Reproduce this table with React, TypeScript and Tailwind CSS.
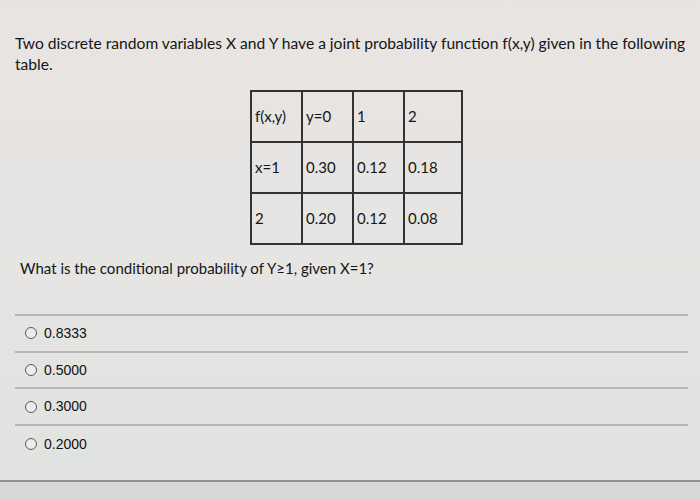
import React from 'react';

const rows = [
  ['f(x,y)', 'y=0', '1', '2'],
  ['x=1', '0.30', '0.12', '0.18'],
  ['2', '0.20', '0.12', '0.08'],
];

const options = ['0.8333', '0.5000', '0.3000', '0.2000'];

const colWidths = ['w-[51px]', 'w-[51px]', 'w-[51px]', 'w-[58px]'];

export default function App() {
  return (
    <div className="w-[700px] h-[499px] flex flex-col bg-linear-to-b from-[#e8e4e2] via-[#e6e5e3] to-[#e0e3e0] text-[#151515] font-['Lato','Open_Sans',sans-serif]">
      <div className="flex-1 flex flex-col">
        {/* question text */}
        <p className="pl-[15px] pr-[6px] pt-[33px] text-[15.6px] leading-[21px]">
          Two discrete random variables X and Y have a joint probability function f(x,y) given in the following table.
        </p>

        {/* joint probability table */}
        <table className="self-start table-fixed w-[212px] ml-[250px] mt-[15px] border-collapse text-[15px]">
          <tbody>
            {rows.map((row, i) => (
              <tr key={i} className="h-[51px]">
                {row.map((cell, j) => (
                  <td key={j} className={`${colWidths[j]} border-2 border-[#333333] pl-[3px] align-middle`}>
                    {cell}
                  </td>
                ))}
              </tr>
            ))}
          </tbody>
        </table>

        <p className="pl-[20px] pt-[13px] text-[15px] leading-[20px]">
          What is the conditional probability of Y≥1, given X=1?
        </p>

        <div className="mt-[36px] ml-[15px] w-[673px] border-t-2 border-[#b5b7b5]">
          {options.map((opt, i) => (
            <div key={opt} className={`h-[36.7px] flex items-center pl-[10px] ${i < options.length - 1 ? 'border-b-2 border-[#b5b7b5]' : ''}`}>
              <span className="w-[12px] h-[12px] rounded-full border border-[#5a5a5a] bg-[#ececec]" />
              <span className="ml-[7px] text-[14px] font-['Liberation_Sans',Arial,sans-serif] text-[#111]">{opt}</span>
            </div>
          ))}
        </div>
      </div>
      <div className="h-[19px] border-t-2 border-[#8e918f] bg-[#d6d8d6]" />
    </div>
  );
}
